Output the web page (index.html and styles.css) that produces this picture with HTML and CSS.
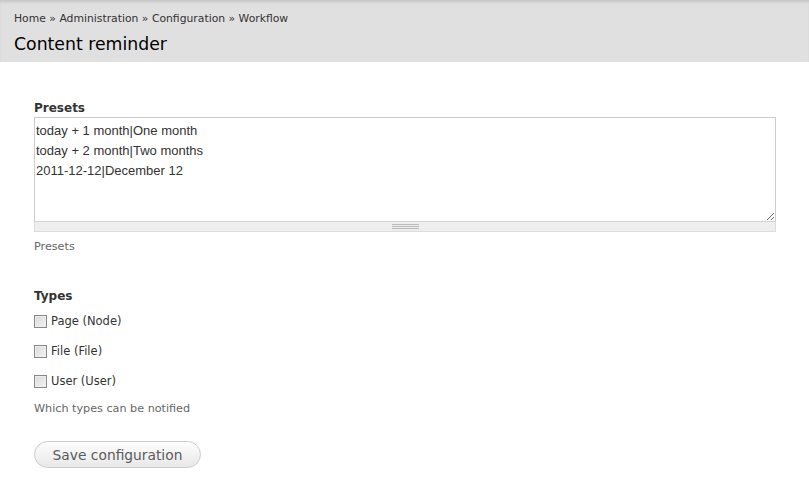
FILE: index.html
```html
<!DOCTYPE html>
<html>
<head>
<meta charset="utf-8">
<link rel="stylesheet" href="styles.css">
</head>
<body>
<div class="branding">
  <div class="breadcrumb"><a href="#">Home</a> » <a href="#">Administration</a> » <a href="#">Configuration</a> » <a href="#">Workflow</a></div>
  <h1 class="page-title">Content reminder</h1>
</div>
<div class="page">
  <form class="form">
    <div class="form-item">
      <label class="form-label" for="presets">Presets</label>
      <div class="textarea-wrap">
        <textarea id="presets" class="textarea" rows="5">today + 1 month|One month
today + 2 month|Two months
2011-12-12|December 12</textarea>
        <div class="grippie"><span class="grip"></span></div>
      </div>
      <div class="description">Presets</div>
    </div>
    <div class="form-item types">
      <div class="form-label">Types</div>
      <div class="checkboxes">
        <label class="option"><input type="checkbox" class="checkbox"> Page (Node)</label>
        <label class="option"><input type="checkbox" class="checkbox"> File (File)</label>
        <label class="option"><input type="checkbox" class="checkbox"> User (User)</label>
      </div>
      <div class="description">Which types can be notified</div>
    </div>
    <div class="actions">
      <button type="button" class="button">Save configuration</button>
    </div>
  </form>
</div>
</body>
</html>
```
FILE: styles.css
```css
html, body {
  margin: 0;
  padding: 0;
  background: #fff;
}
body {
  font-family: "DejaVu Sans", Verdana, sans-serif;
  font-size: 12px;
  color: #333;
}
.branding {
  background: #e0e0e0;
  box-shadow: inset 0 3px 3px -1px rgba(0,0,0,0.12);
  padding: 11px 14px 0 14px;
  height: 51px;
}
.breadcrumb {
  font-size: 10.8px;
  line-height: 16px;
  color: #333;
}
.breadcrumb a {
  color: #333;
  text-decoration: none;
}
.page-title {
  margin: 7px 0 0 0;
  font-weight: normal;
  font-size: 17.3px;
  line-height: 20px;
  color: #000;
}
.page {
  padding: 38px 33px 0 34px;
}
.form-item {
  margin: 0;
}
.form-label {
  display: block;
  font-weight: bold;
  font-size: 12px;
  line-height: 16px;
  color: #333;
  margin-bottom: 1px;
}
.textarea-wrap {
  display: flex;
  flex-direction: column;
}
.textarea {
  box-sizing: border-box;
  display: block;
  width: 100%;
  height: 105px;
  margin: 0;
  border: 1px solid #ccc;
  border-bottom-color: #d4d4d4;
  padding: 3px 1px;
  font-family: "Liberation Sans", Arial, sans-serif;
  font-size: 13px;
  line-height: 20px;
  color: #333;
  resize: vertical;
  outline: none;
  background: #fff;
}
.grippie {
  height: 9px;
  background: #eee;
  border: 1px solid #ddd;
  border-top: 0;
  display: flex;
  justify-content: center;
  align-items: center;
}
.grip {
  width: 27px;
  height: 5px;
  border-top: 1px solid #bbb;
  border-bottom: 1px solid #bbb;
  box-sizing: border-box;
  position: relative;
}
.grip::after {
  content: "";
  position: absolute;
  left: 0;
  right: 0;
  top: 1px;
  height: 1px;
  background: #bbb;
}
.description {
  font-size: 11.2px;
  line-height: 16px;
  color: #666;
  margin-top: 7px;
}
.types {
  margin-top: 33px;
}
.types .form-label {
  margin-bottom: 9px;
}
.checkboxes {
  display: flex;
  flex-direction: column;
  gap: 14px;
}
.option {
  display: flex;
  align-items: center;
  font-size: 11.5px;
  line-height: 16px;
  color: #333;
}
.checkbox {
  appearance: none;
  -webkit-appearance: none;
  width: 13px;
  height: 13px;
  margin: 0 4px 0 0;
  border: 1px solid #888;
  background: linear-gradient(135deg, #d8d8d8, #f4f4f4);
  box-shadow: inset 0 0 0 1px #eee;
  box-sizing: border-box;
}
.types .description {
  margin-top: 12px;
}
.actions {
  margin-top: 24px;
}
.button {
  width: 167px;
  height: 27px;
  border: 1px solid #ccc;
  border-radius: 14px;
  background: linear-gradient(#fdfdfd, #e8e8e8);
  font-family: "DejaVu Sans", Verdana, sans-serif;
  font-size: 13.8px;
  color: #5a5a5a;
  padding: 0;
  cursor: pointer;
}
```
